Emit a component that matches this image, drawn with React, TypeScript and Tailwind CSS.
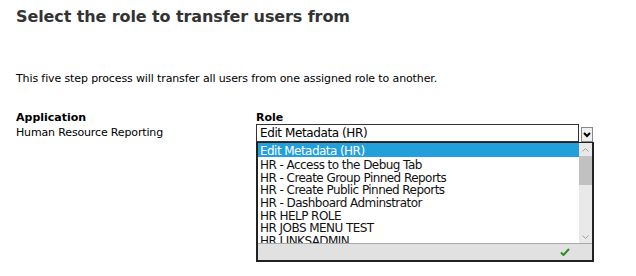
import React from "react";

const roles = [
  "Edit Metadata (HR)",
  "HR - Access to the Debug Tab",
  "HR - Create Group Pinned Reports",
  "HR - Create Public Pinned Reports",
  "HR - Dashboard Adminstrator",
  "HR HELP ROLE",
  "HR JOBS MENU TEST",
  "HR LINKSADMIN",
];

function Check() {
  return (
    <svg width="10" height="8" viewBox="0 0 10 8">
      <path d="M1 4.5 L3.5 7 L9 1" fill="none" stroke="#2f8f1f" strokeWidth="2" />
    </svg>
  );
}

export default function App() {
  const font = { fontFamily: '"DejaVu Sans", Verdana, sans-serif' };
  return (
    <div className="w-[636px] h-[276px] bg-white text-[#222] overflow-hidden" style={font}>
      <div className="pl-[16px] pt-[7px]">
        <h1 className="text-[16px] font-bold text-[#333] leading-[20px] tracking-[-0.1px]">
          Select the role to transfer users from
        </h1>
        <p className="mt-[45px] text-[11px] leading-[14px] text-black tracking-[-0.12px]">
          This five step process will transfer all users from one assigned role to another.
        </p>

        <div className="mt-[26px] flex text-[11px] leading-[12px] text-black">
          <div className="w-[240px]">
            <div className="font-bold">Application</div>
            <div className="mt-[3px] tracking-[-0.15px]">Human Resource Reporting</div>
          </div>

          <div>
            <div className="font-bold">Role</div>
            <div className="flex items-end gap-[2px]">
              <div className="w-[323px] h-[18px] border border-[#333] bg-white flex items-center pl-[3px] text-[12px] tracking-[-0.4px]">
                Edit Metadata (HR)
              </div>
              <div className="w-[12px] h-[15px] border border-[#888] bg-[#f0f0f0] flex items-center justify-center">
                <svg width="8" height="6" viewBox="0 0 8 6">
                  <path d="M1 1 L4 4 L7 1" fill="none" stroke="#000" strokeWidth="2" />
                </svg>
              </div>
            </div>

            <div className="w-[338px] border-2 border-t-1 border-[#222] bg-white">
              <div className="flex h-[101px] border-b border-[#aaa]">
                <div className="flex-1 overflow-hidden text-[12px] leading-[12.7px] tracking-[-0.55px]">
                  {roles.map((r, i) => (
                    <div
                      key={r}
                      className={
                        i === 0
                          ? "bg-[#23a0db] text-white px-[2px] h-[14px] pt-[2px]"
                          : "px-[2px] h-[12.7px] pt-[2px] text-[#111]"
                      }
                    >
                      {r}
                    </div>
                  ))}
                </div>
                <div className="w-[13px] bg-[#e9e9e9] flex flex-col">
                  <div className="h-[13px] flex items-center justify-center">
                    <svg width="7" height="4" viewBox="0 0 7 4">
                      <path d="M0.5 3.5 L3.5 0.5 L6.5 3.5" fill="none" stroke="#a0a0a0" />
                    </svg>
                  </div>
                  <div className="h-[29px] bg-[#c1c1c1]" />
                  <div className="flex-1" />
                  <div className="h-[13px] flex items-center justify-center">
                    <svg width="7" height="4" viewBox="0 0 7 4">
                      <path d="M0.5 0.5 L3.5 3.5 L6.5 0.5" fill="none" stroke="#a0a0a0" />
                    </svg>
                  </div>
                </div>
              </div>
              <div className="h-[16px] bg-[#e1e1e1] flex items-center justify-end pr-[22px]">
                <Check />
              </div>
            </div>
          </div>
        </div>
      </div>
    </div>
  );
}
